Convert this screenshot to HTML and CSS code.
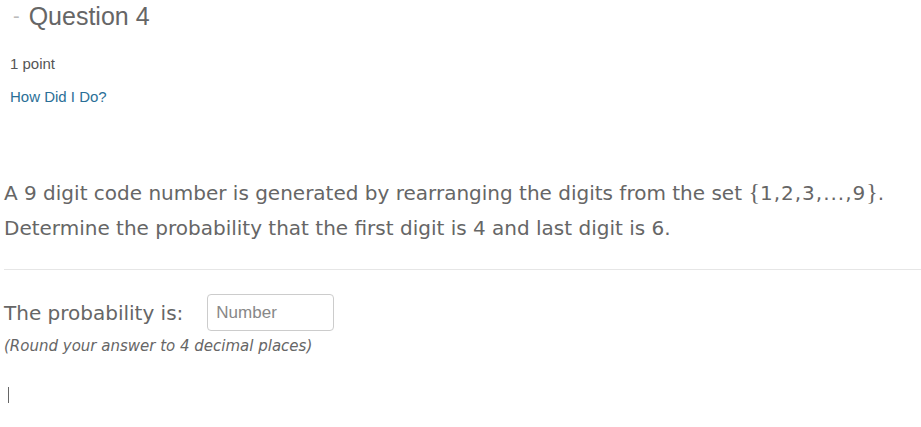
FILE: index.html
```html
<!DOCTYPE html>
<html lang="en">
<head>
    <meta charset="UTF-8">
    <title>Question 4</title>
    <link rel="stylesheet" href="styles.css">
</head>
<body>
    <div class="question">
        <div class="question-head">
            <span class="toggle">-</span>
            <h3>Question 4</h3>
        </div>
        <div class="points">1 point</div>
        <a class="how-did" href="#">How Did I Do?</a>

        <div class="prompt">
            <p>A 9 digit code number is generated by rearranging the digits from the set <span class="math"><span class="brace">{</span>1,2,3,...,9<span class="brace">}</span></span>.</p>
            <p>Determine the probability that the first digit is 4 and last digit is 6.</p>
        </div>

        <div class="answer">
            <div class="answer-row">
                <label for="prob">The probability is:</label>
                <input type="text" id="prob" placeholder="Number">
            </div>
            <p class="hint">(Round your answer to 4 decimal places)</p>
        </div>

        <div class="caret"></div>
    </div>
</body>
</html>
```

FILE: styles.css
```css
body {
    margin: 0;
    background-color: #fff;
    font-family: "Liberation Sans", Arial, sans-serif;
    color: #666;
}
.question {
    padding: 0 0 0 4px;
}
.question-head {
    display: flex;
    align-items: center;
    height: 32px;
    padding-left: 9px;
}
.toggle {
    color: #bbb;
    font-size: 20px;
    margin-right: 9px;
}
h3 {
    margin: 0;
    font-weight: normal;
    font-size: 25px;
    color: #666;
}
.points {
    font-size: 15px;
    color: #555;
    margin: 23px 0 0 6px;
}
.how-did {
    display: block;
    font-size: 15px;
    color: #2a6f97;
    text-decoration: none;
    margin: 16px 0 0 6px;
}
.prompt {
    margin-top: 70px;
    font-family: "DejaVu Sans", Verdana, sans-serif;
    font-size: 20px;
    color: #666;
    padding-bottom: 23px;
    border-bottom: 1px solid #e6e6e6;
}
.prompt p {
    margin: 0;
    line-height: 35px;
}
.math {
    letter-spacing: 1px;
}
.brace {
    font-family: "Liberation Serif", "DejaVu Serif", serif;
    font-size: 24px;
    letter-spacing: 0;
}
.answer {
    font-family: "DejaVu Sans", Verdana, sans-serif;
    padding-top: 24px;
}
.answer-row {
    display: flex;
    align-items: center;
}
.answer-row label {
    font-size: 20px;
    color: #666;
    margin-right: 24px;
}
.answer-row input {
    width: 127px;
    height: 37px;
    box-sizing: border-box;
    border: 1px solid #ccc;
    border-radius: 4px;
    padding: 0 8px;
    font-family: "Liberation Sans", Arial, sans-serif;
    font-size: 17px;
}
.answer-row input::placeholder {
    color: #888;
}
.hint {
    margin: 6px 0 0;
    font-size: 15px;
    font-style: italic;
    color: #666;
}
.caret {
    width: 1px;
    height: 16px;
    background-color: #666;
    margin: 32px 0 0 4px;
}
```
